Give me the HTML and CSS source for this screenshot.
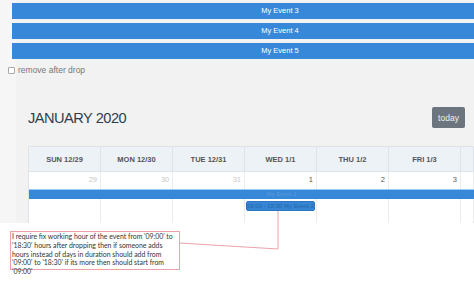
FILE: index.html
```html
<!DOCTYPE html>
<html>
<head>
    <meta charset="UTF-8">
    <meta name="viewport" content="width=device-width, initial-scale=1.0">
    <title>calendar drop</title>
    <link rel="stylesheet" href="styles.css">
</head>
<body>
    <div class="app">
        <div class="external">
            <div class="ext-event">My Event 3</div>
            <div class="ext-event">My Event 4</div>
            <div class="ext-event">My Event 5</div>
        </div>
        <label class="drop-option">
            <span class="box"></span>
            remove after drop
        </label>

        <div class="calendar">
            <div class="toolbar">
                <h2>JANUARY 2020</h2>
                <button class="today">today</button>
            </div>
            <div class="week">
                <div class="head">SUN 12/29</div>
                <div class="head">MON 12/30</div>
                <div class="head">TUE 12/31</div>
                <div class="head">WED 1/1</div>
                <div class="head">THU 1/2</div>
                <div class="head">FRI 1/3</div>
                <div class="head"></div>

                <div class="day other">29</div>
                <div class="day other">30</div>
                <div class="day other">31</div>
                <div class="day">1</div>
                <div class="day">2</div>
                <div class="day">3</div>
                <div class="day"></div>

                <div class="bar">My Event 1</div>
                <div class="mirror">09:00 - 18:30 My Event 2</div>
            </div>
        </div>
    </div>

    <div class="note">
        <span>I require fix working hour of the event from '09:00' to</span>
        <span>'18:30' hours after dropping then if someone adds</span>
        <span>hours instead of days in duration should add from</span>
        <span>'09:00' to '18:30' if its more then should start from</span>
        <span>'09:00'</span>
    </div>
    <svg class="connector" width="110" height="60" viewBox="0 0 110 60">
        <polyline points="0,43 99,49 99,11" fill="none" stroke="#eba2ab" stroke-width="1"/>
    </svg>
</body>
</html>
```

FILE: styles.css
```css
body {
    margin: 0;
    padding: 0;
    width: 474px;
    height: 283px;
    overflow: hidden;
    position: relative;
    background: white;
    font-family: "Liberation Sans", Arial, sans-serif;
}

.app {
    height: 220px;
    padding-top: 3px;
    background: linear-gradient(to right, #f6f6f6 0, #f6f6f6 16px, #f2f2f2 16px);
}

.external {
    margin-left: 12px;
    display: flex;
    flex-direction: column;
    gap: 4px;
}

.ext-event {
    height: 16px;
    line-height: 16px;
    padding-left: 74px;
    background: #3788d8;
    color: white;
    font-size: 7.5px;
    text-align: center;
}

.drop-option {
    display: flex;
    align-items: center;
    gap: 3px;
    margin: 5px 0 0 8px;
    font-size: 8.5px;
    color: #777;
    height: 12px;
}

.box {
    width: 5px;
    height: 5px;
    border: 1px solid #aaa;
    border-radius: 1px;
    background: white;
}

.calendar {
    margin-left: 28px;
}

.toolbar {
    display: flex;
    justify-content: space-between;
    align-items: center;
    margin-top: 31px;
    margin-right: 9px;
    height: 21px;
}

.toolbar h2 {
    margin: 0;
    font-size: 14.6px;
    font-weight: normal;
    color: #2c3e50;
    letter-spacing: -0.5px;
}

.today {
    height: 21px;
    width: 33px;
    padding: 0;
    border: none;
    border-radius: 2px;
    background: #6c757d;
    color: #eef0f2;
    font-family: "Liberation Sans", Arial, sans-serif;
    font-size: 8.5px;
}

.week {
    margin-top: 18px;
    display: grid;
    grid-template-columns: repeat(6, 72px) 1fr;
    grid-template-rows: 25px 17px 10px 2px 10px 12px;
    border-left: 1px solid #dde3e8;
    border-top: 1px solid #dde3e8;
}

.head {
    grid-row: 1;
    display: flex;
    align-items: center;
    justify-content: center;
    background: #edf2f6;
    border-right: 1px solid #dde3e8;
    border-bottom: 1px solid #dde3e8;
    font-size: 7.5px;
    font-weight: bold;
    color: #555;
}

.day {
    grid-row: 2 / -1;
    background: white;
    border-right: 1px solid #ececec;
    text-align: right;
    padding: 3px 3px 0 0;
    font-size: 7.5px;
    color: #555;
}

.day:nth-child(8) { grid-column: 1; }
.day:nth-child(9) { grid-column: 2; }
.day:nth-child(10) { grid-column: 3; }
.day:nth-child(11) { grid-column: 4; }
.day:nth-child(12) { grid-column: 5; }
.day:nth-child(13) { grid-column: 6; }
.day:nth-child(14) { grid-column: 7; }

.day.other {
    color: #c8c8c8;
}

.bar {
    grid-row: 3;
    grid-column: 1 / -1;
    padding-left: 60px;
    background: #3788d8;
    border-top: 1px solid #9cc8f0;
    font-size: 6px;
    line-height: 9px;
    text-align: center;
    color: #5d9bd9;
}

.mirror {
    grid-row: 5;
    grid-column: 4;
    margin: 0 2px 0 1px;
    background: #3585d4;
    border: 1px solid #2f76c0;
    border-radius: 2px;
    font-size: 6px;
    line-height: 8px;
    color: #2766a8;
    white-space: nowrap;
    overflow: hidden;
    text-align: center;
}

.note {
    position: absolute;
    left: 10px;
    top: 231px;
    width: 167px;
    height: 37px;
    border: 1px solid #eba2ab;
    background: white;
    padding: 0 0 0 1px;
    display: flex;
    flex-direction: column;
    font-family: Lato, "Open Sans", sans-serif;
    font-size: 6.9px;
    line-height: 8.8px;
    color: #333;
    white-space: nowrap;
}

.connector {
    position: absolute;
    left: 179px;
    top: 200px;
}
```
